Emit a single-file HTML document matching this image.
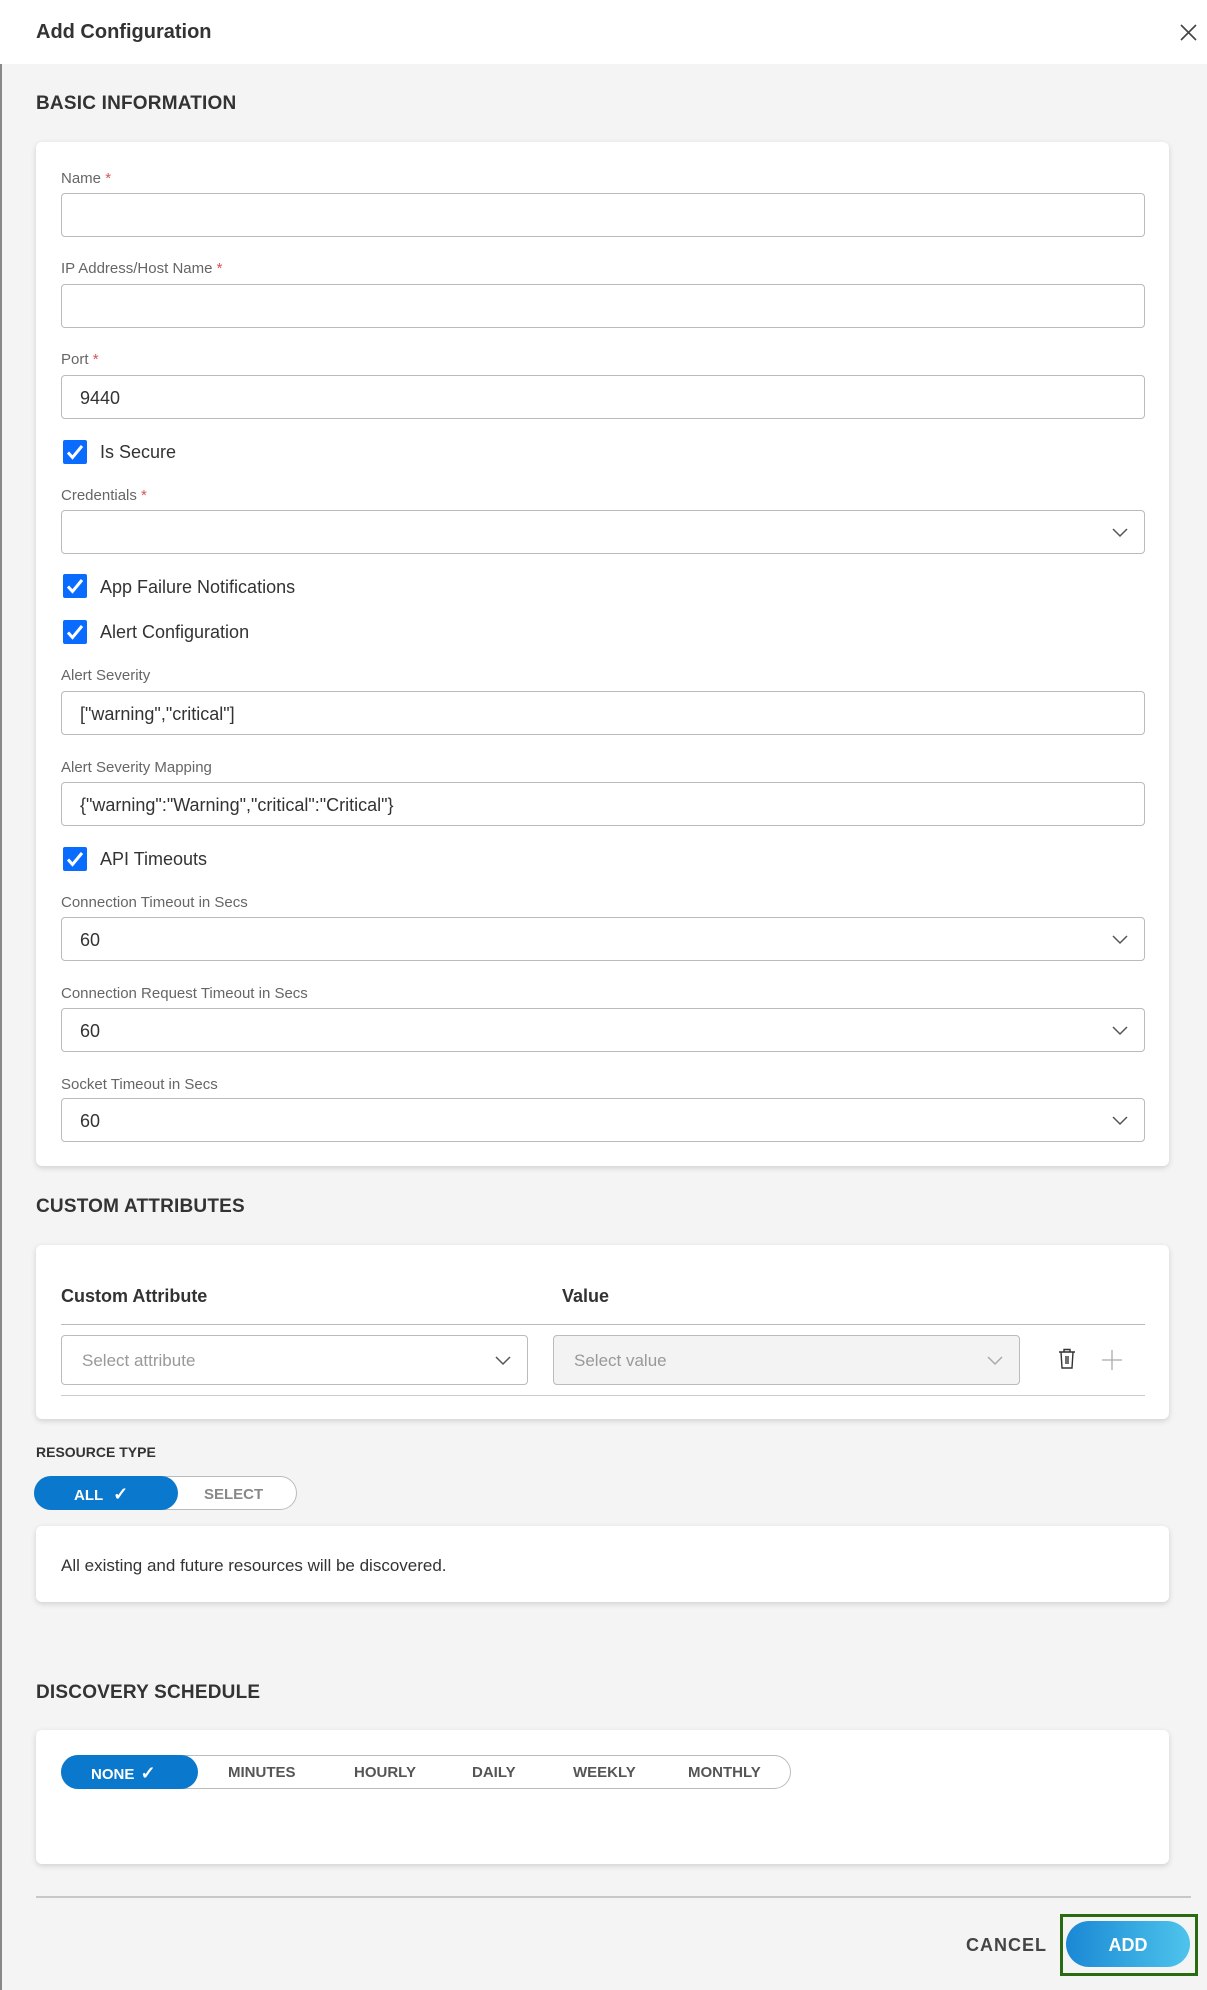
<!DOCTYPE html>
<html><head><meta charset="utf-8"><style>
*{box-sizing:border-box;margin:0;padding:0}
body{width:1207px;height:1990px;background:#f4f4f4;font-family:"Liberation Sans",Arial,sans-serif;color:#333;position:relative;overflow:hidden}
.a{position:absolute}
.hdr{left:0;top:0;width:1207px;height:64px;background:#fff}
.lb{left:0;top:0;width:2px;height:1990px;background:#888}
.card{background:#fff;border-radius:6px;box-shadow:0 2px 6px rgba(0,0,0,.15)}
.lbl{font-size:15px;color:#666}
.lbl i{color:#d9534f;font-style:normal}
.inp{left:61px;width:1084px;height:44px;border:1px solid #bbb;border-radius:4px;background:#fff;font-size:18px;color:#333;padding-left:18px;line-height:44px}
.chev{position:absolute;right:16px;top:13px}
.cb{width:24px;height:24px;background:#0a6cff;border-radius:2px}
.cbt{font-size:18px;color:#333}
.sec{font-size:19px;color:#333;left:36px;font-weight:bold;letter-spacing:0.2px}
</style></head><body>
<div class="a lb"></div>
<div class="a hdr"></div>
<div class="a" style="left:36px;top:21px;font-size:20px;color:#333;font-weight:bold">Add Configuration</div>
<svg class="a" style="left:1180px;top:24px" width="17" height="17"><path d="M1 1L16 16M16 1L1 16" stroke="#444" stroke-width="1.6"/></svg>

<div class="a sec" style="top:93px">BASIC INFORMATION</div>
<div class="a card" style="left:36px;top:142px;width:1133px;height:1024px"></div>

<div class="a lbl" style="left:61px;top:170px">Name <i>*</i></div>
<div class="a inp" style="top:193px"></div>
<div class="a lbl" style="left:61px;top:260px">IP Address/Host Name <i>*</i></div>
<div class="a inp" style="top:284px"></div>
<div class="a lbl" style="left:61px;top:351px">Port <i>*</i></div>
<div class="a inp" style="top:375px">9440</div>

<svg class="a cb" style="left:63px;top:440px" viewBox="0 0 24 24"><path d="M5 12.5l4.5 5L19 6" stroke="#fff" stroke-width="3" fill="none"/></svg>
<div class="a cbt" style="left:100px;top:442px">Is Secure</div>

<div class="a lbl" style="left:61px;top:487px">Credentials <i>*</i></div>
<div class="a inp" style="top:510px"><svg class="chev" width="16" height="16"><path d="M1 5l7 7 7-7" stroke="#555" stroke-width="1.5" fill="none"/></svg></div>

<svg class="a cb" style="left:63px;top:574px" viewBox="0 0 24 24"><path d="M5 12.5l4.5 5L19 6" stroke="#fff" stroke-width="3" fill="none"/></svg>
<div class="a cbt" style="left:100px;top:577px">App Failure Notifications</div>
<svg class="a cb" style="left:63px;top:620px" viewBox="0 0 24 24"><path d="M5 12.5l4.5 5L19 6" stroke="#fff" stroke-width="3" fill="none"/></svg>
<div class="a cbt" style="left:100px;top:622px">Alert Configuration</div>

<div class="a lbl" style="left:61px;top:667px">Alert Severity</div>
<div class="a inp" style="top:691px">["warning","critical"]</div>
<div class="a lbl" style="left:61px;top:759px">Alert Severity Mapping</div>
<div class="a inp" style="top:782px">{"warning":"Warning","critical":"Critical"}</div>

<svg class="a cb" style="left:63px;top:847px" viewBox="0 0 24 24"><path d="M5 12.5l4.5 5L19 6" stroke="#fff" stroke-width="3" fill="none"/></svg>
<div class="a cbt" style="left:100px;top:849px">API Timeouts</div>

<div class="a lbl" style="left:61px;top:894px">Connection Timeout in Secs</div>
<div class="a inp" style="top:917px">60<svg class="chev" width="16" height="16"><path d="M1 5l7 7 7-7" stroke="#555" stroke-width="1.5" fill="none"/></svg></div>
<div class="a lbl" style="left:61px;top:985px">Connection Request Timeout in Secs</div>
<div class="a inp" style="top:1008px">60<svg class="chev" width="16" height="16"><path d="M1 5l7 7 7-7" stroke="#555" stroke-width="1.5" fill="none"/></svg></div>
<div class="a lbl" style="left:61px;top:1076px">Socket Timeout in Secs</div>
<div class="a inp" style="top:1098px">60<svg class="chev" width="16" height="16"><path d="M1 5l7 7 7-7" stroke="#555" stroke-width="1.5" fill="none"/></svg></div>

<div class="a sec" style="top:1196px">CUSTOM ATTRIBUTES</div>
<div class="a card" style="left:36px;top:1245px;width:1133px;height:174px"></div>
<div class="a" style="left:61px;top:1286px;font-size:18px;font-weight:bold;color:#333">Custom Attribute</div>
<div class="a" style="left:562px;top:1286px;font-size:18px;font-weight:bold;color:#333">Value</div>
<div class="a" style="left:61px;top:1324px;width:1084px;height:1px;background:#bbb"></div>
<div class="a inp" style="top:1335px;width:467px;height:50px;line-height:50px;color:#999;font-size:17px;padding-left:20px">Select attribute<svg class="chev" style="top:16px" width="16" height="16"><path d="M1 5l7 7 7-7" stroke="#555" stroke-width="1.5" fill="none"/></svg></div>
<div class="a inp" style="left:553px;top:1335px;width:467px;height:50px;line-height:50px;color:#999;font-size:17px;background:#f3f3f3;padding-left:20px">Select value<svg class="chev" style="top:16px" width="16" height="16"><path d="M1 5l7 7 7-7" stroke="#aaa" stroke-width="1.5" fill="none"/></svg></div>
<svg class="a" style="left:1058px;top:1348px" width="18" height="22"><path d="M1 4h16M6 4V1.5h6V4M3 4l1 16h10l1-16M8 8v8M10 8v8" stroke="#333" stroke-width="1.4" fill="none"/></svg>
<svg class="a" style="left:1102px;top:1350px" width="20" height="20"><path d="M10 0v20M0 10h20" stroke="#aaa" stroke-width="1.3"/></svg>
<div class="a" style="left:61px;top:1395px;width:1084px;height:1px;background:#ccc"></div>

<div class="a" style="left:36px;top:1444px;font-size:14px;font-weight:bold;color:#333">RESOURCE TYPE</div>
<div class="a" style="left:34px;top:1476px;width:263px;height:34px;border:1px solid #bbb;border-radius:17px;background:#fff"></div>
<div class="a" style="left:34px;top:1476px;width:144px;height:34px;border-radius:17px;background:#0a78cc;color:#fff;font-weight:bold;font-size:15px;line-height:36px;padding-left:40px">ALL <span style="font-size:18px;margin-left:6px">✓</span></div>
<div class="a" style="left:204px;top:1477px;line-height:36px;font-size:15px;font-weight:bold;color:#888">SELECT</div>
<div class="a card" style="left:36px;top:1526px;width:1133px;height:76px"></div>
<div class="a" style="left:61px;top:1556px;font-size:17px;color:#333">All existing and future resources will be discovered.</div>

<div class="a sec" style="top:1682px">DISCOVERY SCHEDULE</div>
<div class="a card" style="left:36px;top:1730px;width:1133px;height:134px"></div>
<div class="a" style="left:61px;top:1755px;width:730px;height:34px;border:1px solid #bbb;border-radius:17px;background:#fff"></div>
<div class="a" style="left:61px;top:1755px;width:137px;height:34px;border-radius:17px;background:#0a78cc;color:#fff;font-weight:bold;font-size:15px;line-height:36px;padding-left:30px">NONE <span style="font-size:18px;margin-left:2px">✓</span></div>
<div class="a" style="top:1756px;left:0;line-height:34px;font-size:15px;font-weight:bold;color:#555">
<span class="a" style="left:228px">MINUTES</span><span class="a" style="left:354px">HOURLY</span><span class="a" style="left:472px">DAILY</span><span class="a" style="left:573px">WEEKLY</span><span class="a" style="left:688px">MONTHLY</span></div>

<div class="a" style="left:36px;top:1896px;width:1155px;height:2px;background:#c8c8c8"></div>
<div class="a" style="left:966px;top:1935px;font-size:18px;font-weight:bold;color:#444;letter-spacing:1px">CANCEL</div>
<div class="a" style="left:1060px;top:1914px;width:138px;height:62px;border:3px solid #2a6a10"></div>
<div class="a" style="left:1066px;top:1921px;width:124px;height:46px;border-radius:23px;background:linear-gradient(90deg,#1a88d4,#4ec4ec);color:#fff;font-weight:bold;font-size:18px;line-height:48px;text-align:center">ADD</div>
</body></html>
